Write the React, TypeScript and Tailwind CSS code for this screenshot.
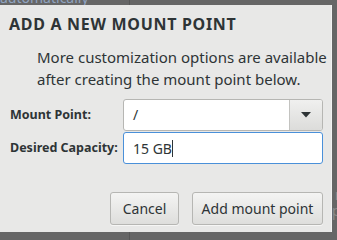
import React from 'react';

const App: React.FC = () => {
  return (
    <div
      className="relative w-[337px] h-[240px] overflow-hidden bg-[#666666]"
      style={{ fontFamily: '"Noto Sans", "Open Sans", sans-serif' }}
    >
      {/* window behind the dialog */}
      <div className="flex h-full">
        <div className="w-[130px] h-full border-r border-[#575757] overflow-hidden">
          <div className="h-[5px] overflow-hidden">
            <p className="-mt-[10px] text-[14px] leading-[16px] text-[#8fa3c0]">automatically</p>
          </div>
        </div>
        <div className="flex-1 h-full flex flex-col justify-end items-end pb-[22px]">
          <span className="text-[15px] leading-[16px] text-[#8a8a8a] -mr-[4px]">r</span>
          <span className="text-[15px] leading-[16px] text-[#8a8a8a] -mr-[4px]">p</span>
        </div>
      </div>

      {/* dialog */}
      <div className="absolute left-0 top-[5px] w-[332px] h-[227px] bg-[#e8e8e7] border-r border-[#f2f2f2] flex flex-col">
        <h2 className="pl-[9px] pt-[9px] text-[16px] leading-[20px] font-bold text-[#2e3436] tracking-[0.7px]">
          ADD A NEW MOUNT POINT
        </h2>
        <p className="pl-[37px] pt-[12px] text-[15px] leading-[22px] text-[#2e3436]">
          More customization options are available
          <br />
          after creating the mount point below.
        </p>

        <div className="mt-[9px] pl-[10px] pr-[8px] flex flex-col gap-[1px]">
          <div className="flex items-center">
            <span className="w-[113px] text-[12.5px] font-bold text-[#2e3436]">Mount Point:</span>
            <div className="flex flex-1 h-[32px] border border-[#b6b6b3] rounded-[3px] bg-white overflow-hidden">
              <span className="flex-1 pl-[9px] leading-[30px] text-[14px] text-[#2e3436]">/</span>
              <div className="w-[33px] border-l border-[#c3c3c0] bg-gradient-to-b from-[#f0f0ef] to-[#dcdcda] flex items-center justify-center">
                <svg width="10" height="6" viewBox="0 0 10 6">
                  <path d="M0 0 L10 0 L5 5.5 Z" fill="#2e3436" />
                </svg>
              </div>
            </div>
          </div>
          <div className="flex items-center">
            <span className="w-[113px] text-[12.5px] font-bold text-[#2e3436]">Desired Capacity:</span>
            <div className="flex flex-1 h-[32px] items-center border border-[#4a90d9] rounded-[3px] bg-white pl-[9px] text-[14px] text-[#2e3436]">
              15 GB
              <span className="w-px h-[17px] bg-[#2e3436]" />
            </div>
          </div>
        </div>

        <div className="mt-auto mb-[7px] pr-[8px] flex justify-end gap-[13px]">
          <button className="w-[69px] h-[33px] rounded-[3px] border border-[#b6b6b3] bg-gradient-to-b from-[#f4f4f3] to-[#dededc] text-[14px] text-[#2e3436] shadow-[0_1px_0_rgba(255,255,255,0.6)]">
            Cancel
          </button>
          <button className="w-[131px] h-[33px] rounded-[3px] border border-[#b6b6b3] bg-gradient-to-b from-[#f4f4f3] to-[#dededc] text-[14px] text-[#2e3436] shadow-[0_1px_0_rgba(255,255,255,0.6)]">
            Add mount point
          </button>
        </div>
      </div>
    </div>
  );
};

export default App;
